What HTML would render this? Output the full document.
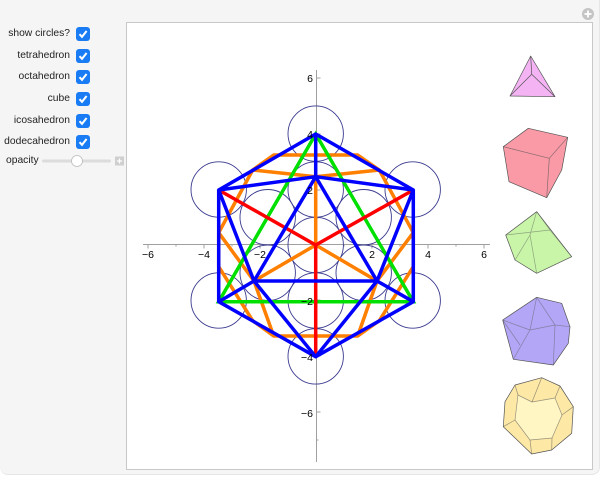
<!DOCTYPE html>
<html><head><style>
html,body{margin:0;padding:0;width:600px;height:477px;background:#fff;overflow:hidden;font-family:"Liberation Sans",sans-serif;}
#panel{position:absolute;left:0;top:0;width:599px;height:474px;background:#f5f5f5;border-radius:0 0 8px 8px;border-right:1px solid #e6e6e6;border-bottom:1px solid #e6e6e6;}
#box{position:absolute;left:126px;top:22px;width:465px;height:446px;background:#fff;border:1px solid #c8c8c8;}
.row{position:absolute;left:0;width:70px;text-align:right;font-size:10.3px;color:#222;}
.cb{position:absolute;left:76px;width:14px;height:14px;border-radius:3px;background:#1a7cf5;}
.cb svg{position:absolute;left:0;top:0}
</style></head><body>
<div id="panel"></div>
<div id="box"></div>
<svg style="position:absolute;left:581px;top:7px" width="14" height="14"><circle cx="7" cy="7" r="6" fill="#c4c4c4"/><path d="M7 3.5V10.5M3.5 7H10.5" stroke="#fff" stroke-width="1.8"/></svg>

<div class="row" style="top:28px">show circles?</div><div class="cb" style="top:27px"><svg width="14" height="14"><path d="M3.5 7.2L6 9.8L10.6 4" stroke="#fff" stroke-width="2" fill="none"/></svg></div>
<div class="row" style="top:50px">tetrahedron</div><div class="cb" style="top:49px"><svg width="14" height="14"><path d="M3.5 7.2L6 9.8L10.6 4" stroke="#fff" stroke-width="2" fill="none"/></svg></div>
<div class="row" style="top:71px">octahedron</div><div class="cb" style="top:70px"><svg width="14" height="14"><path d="M3.5 7.2L6 9.8L10.6 4" stroke="#fff" stroke-width="2" fill="none"/></svg></div>
<div class="row" style="top:93px">cube</div><div class="cb" style="top:92px"><svg width="14" height="14"><path d="M3.5 7.2L6 9.8L10.6 4" stroke="#fff" stroke-width="2" fill="none"/></svg></div>
<div class="row" style="top:115px">icosahedron</div><div class="cb" style="top:114px"><svg width="14" height="14"><path d="M3.5 7.2L6 9.8L10.6 4" stroke="#fff" stroke-width="2" fill="none"/></svg></div>
<div class="row" style="top:136px">dodecahedron</div><div class="cb" style="top:135px"><svg width="14" height="14"><path d="M3.5 7.2L6 9.8L10.6 4" stroke="#fff" stroke-width="2" fill="none"/></svg></div>
<div style="position:absolute;left:6px;top:155px;font-size:10.3px;color:#222">opacity</div>
<svg style="position:absolute;left:40px;top:154px" width="86" height="14">
<rect x="2" y="5.5" width="69" height="3" rx="1.5" fill="#dcdcdc"/>
<circle cx="37" cy="7" r="5.5" fill="#fff" stroke="#bbb" stroke-width="0.8"/>
<rect x="75" y="2.5" width="9" height="9" fill="#cfcfcf"/><path d="M79.5 4.5V9.5M77 7H82" stroke="#fff" stroke-width="1.2"/>
</svg>

<svg style="position:absolute;left:0;top:0" width="600" height="477">
<g stroke="#a0a0a0" stroke-width="1" fill="none">
<path d="M143 244.5H490M316.5 70V462"/>
<path d="M148 244.5v4M176 244.5v2M204 244.5v4M232 244.5v2M260 244.5v4M288 244.5v2M344 244.5v2M372 244.5v4M400 244.5v2M428 244.5v4M456 244.5v2M484 244.5v4"/>
<path d="M316.5 78h4M316.5 106h2M316.5 134h4M316.5 162h2M316.5 190h4M316.5 218h2M316.5 272h2M316.5 300h4M316.5 328h2M316.5 356h4M316.5 384h2M316.5 412h4M316.5 440h2"/>
</g>
<g stroke="#3a3a8f" stroke-width="0.9" fill="none">
<circle cx="315.7" cy="133.6" r="27.7"/><circle cx="315.7" cy="356.4" r="27.7"/>
<circle cx="218.7" cy="189.5" r="27.7"/><circle cx="412.7" cy="189.5" r="27.7"/>
<circle cx="218.7" cy="300.5" r="27.7"/><circle cx="412.7" cy="300.5" r="27.7"/>
<circle cx="315.7" cy="245" r="27.7"/>
<circle cx="315.7" cy="189.5" r="27.7"/><circle cx="315.7" cy="300.5" r="27.7"/>
<circle cx="267.7" cy="217.2" r="27.7"/><circle cx="363.7" cy="217.2" r="27.7"/>
<circle cx="267.7" cy="272.8" r="27.7"/><circle cx="363.7" cy="272.8" r="27.7"/>
</g>
<g stroke="#ff7f00" stroke-width="3.5" fill="none" stroke-linejoin="round">
<path d="M273.7 155H357.7L379.3 170L413.3 232.7V266.7L379.3 320.7L357.7 336H273.7L252.7 320.7L218.7 266.7V232.7L252.7 170Z"/>
<path d="M252.7 170L315.7 176.7L379.3 170M315.7 176.7V245M254 281L315.7 245L377 281M218.7 232.7L254 281L273.7 336M413.3 232.7L377 281L357.7 336"/>
</g>
<g stroke="#00e000" stroke-width="3.5" fill="none"><path d="M315.7 134L218.7 301.7H413.3Z"/></g>
<g stroke="#ff0000" stroke-width="3.5" fill="none"><path d="M218.7 190L315.7 245L413.3 190M315.7 245V356.7"/></g>
<g stroke="#0000ff" stroke-width="3.5" fill="none" stroke-linejoin="round">
<path d="M315.7 134L413.3 190V301.7L315.7 356.7L218.7 301.7V190Z"/>
<path d="M315.7 134V176.7M218.7 190L315.7 176.7L413.3 190M254 281L315.7 176.7L377 281ZM218.7 190L254 281L218.7 301.7M413.3 190L377 281L413.3 301.7M254 281L315.7 356.7L377 281"/>
</g>
<g font-size="10.5" fill="#000" text-anchor="middle">
<text x="148" y="258">−6</text><text x="204" y="258">−4</text><text x="260" y="258">−2</text><text x="372" y="258">2</text><text x="428" y="258">4</text><text x="484" y="258">6</text>
<text x="310" y="82">6</text><text x="310" y="138">4</text><text x="310" y="194">2</text><text x="307" y="305">−2</text><text x="307" y="361">−4</text><text x="307" y="417">−6</text>
</g>
<g stroke="#555" stroke-width="0.7" stroke-linejoin="round">
<path d="M530.7 56L510 96L555 96.7Z" fill="#f4b4f4"/>
<path d="M530.7 56L531.7 74.3L510 96M531.7 74.3L555 96.7" fill="none"/>
<path d="M528.3 128.3L567.7 137.3L561.7 170L546.7 197.7L509 181.7L503.3 146.7Z" fill="#fa9aa6"/>
<path d="M503.3 146.7L549.3 158.3L567.7 137.3M549.3 158.3L546.7 197.7" fill="none" stroke-opacity="0.7"/>
<path d="M536.7 211.7L571.7 256.7L536.7 273.3L515 260L505.7 235Z" fill="#c8f5a8"/>
<path d="M505.7 235L550 230L571.7 256.7M536.7 211.7L550 230M515 260L530 235L536.7 273.3M536.7 211.7L530 235" fill="none" stroke-opacity="0.5"/>
<path d="M536.7 297.3L561.7 303.3L570 326.7L568.3 343.3L553.3 365L513.3 359.3L502.7 320Z" fill="#b4a6f6"/>
<path d="M502.7 320L530 330L536.7 297.3L555 325L570 326.7M530 330L555 325L553.3 365M530 330L513.3 359.3M502.7 320L520 345" fill="none" stroke-opacity="0.5"/>
<path d="M541.7 377.7L560 386L573.3 406.7L571.7 433.3L551.7 450L531.7 454L503.3 426.7L505 401.7L515 385Z" fill="#fde8a6"/>
<path d="M518 395L532 402L555 398L562 415L552 438L530 440L515 420Z" fill="#fff6c4" stroke-opacity="0.6"/>
<path d="M541.7 377.7L532 402M560 386L555 398M573.3 406.7L562 415M551.7 450L552 438M531.7 454L530 440M503.3 426.7L515 420M515 385L518 395" fill="none" stroke-opacity="0.6"/>
</g>
</svg>
</body></html>
